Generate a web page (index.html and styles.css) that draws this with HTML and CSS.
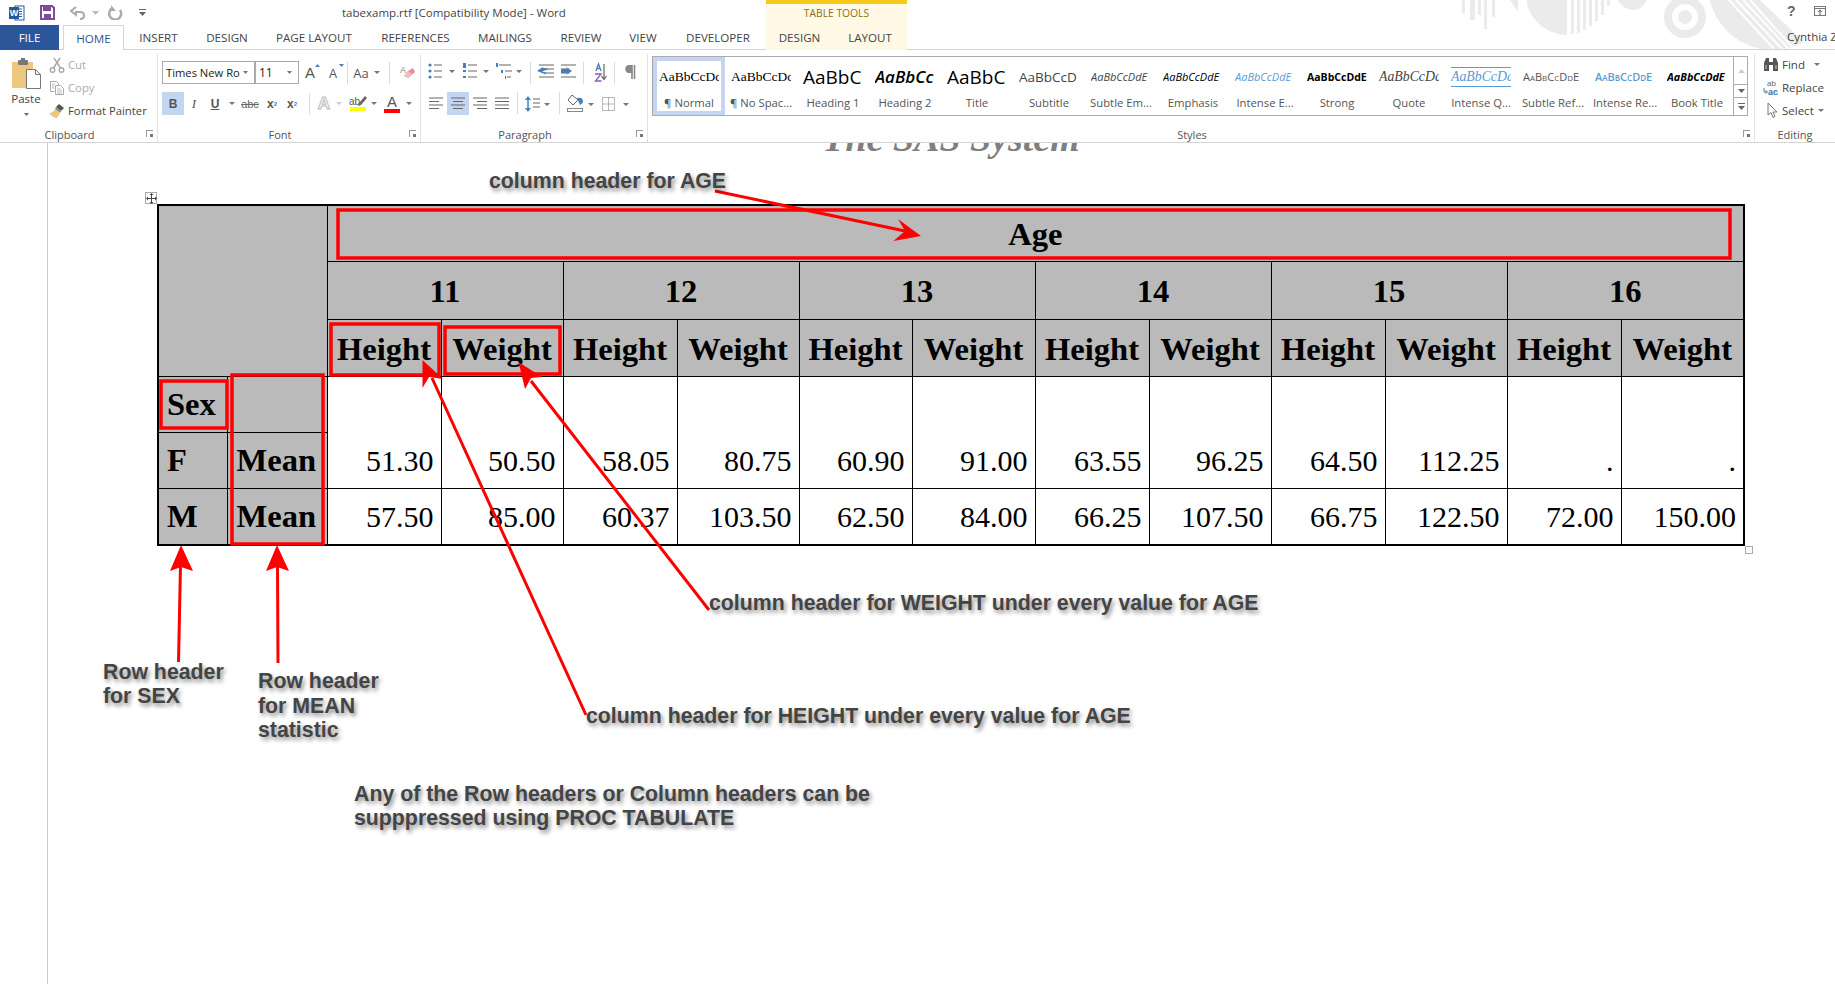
FILE: index.html
```html
<!DOCTYPE html>
<html lang="en">
<head>
<meta charset="utf-8">
<title>tabexamp.rtf - Word</title>
<link rel="stylesheet" href="styles.css">
</head>
<body>
<div class="app">
  <header class="head">
    <svg class="art" width="375" height="50" viewBox="1460 0 375 50" aria-hidden="true">
      <g fill="#ebebeb">
        <rect x="1462" y="0" width="3" height="13"/><rect x="1470" y="0" width="5" height="20"/><rect x="1478" y="0" width="3" height="15"/><rect x="1484" y="0" width="3" height="29"/><rect x="1492" y="0" width="3" height="17"/>
        <path d="M1510 0h8v12z"/>
        <path d="M1527 0h40v35c-18 0-34-12-40-30z"/>
        <path d="M1571 0h3v34h-3zM1577 0h3v33h-3zM1583 0h3v30h-3zM1589 0h3v26h-3zM1595 0h3v21h-3zM1601 0h3v15h-3zM1607 0h3v6h-3z"/>
        <path d="M1618 0h29c-3 6-8 10-14 10s-12-4-15-10z"/>
        <circle cx="1685" cy="17" r="21"/>
        <circle cx="1773" cy="-15" r="65"/>
      </g>
      <circle cx="1685" cy="17" r="13" fill="#fff"/><circle cx="1685" cy="17" r="7" fill="#ebebeb"/>
      <path d="M1760 0h80v50h-28z" fill="#fff"/>
      <g stroke="#fff" stroke-width="2"><path d="M1729 0l45 49M1736 0l46 49M1743 0l46 49M1750 0l44 49"/></g>
    </svg>
    <div class="titlebar">
      <div class="qat">
        <svg width="16" height="16" class="qat-word" viewBox="0 0 16 16"><rect x="6" y="1" width="9" height="14" fill="#fff" stroke="#2b579a"/><path d="M9 4h4M9 6.500h4M9 9h4M9 11.500h4" stroke="#2b579a"/><rect x="0" y="2" width="10" height="12" fill="#2b579a"/><text x="5" y="11" class="word-w">W</text></svg>
        <svg width="15" height="15" class="qat-save" viewBox="0 0 15 15"><path d="M1 1h11l2 2v11H1z" fill="none" stroke="#7e4a9e" stroke-width="2"/><rect x="3" y="1" width="8" height="5" fill="#7e4a9e"/><rect x="4" y="9" width="7" height="5" fill="#7e4a9e"/></svg>
        <svg width="17" height="14" class="qat-undo" viewBox="0 0 17 14"><path d="M6 1L1 5l5 4V6h5c2 0 3 2 3 3.500S13 13 10 13" fill="none" stroke="#aaa" stroke-width="2"/></svg>
        <svg width="7" height="4" class="qat-caret" viewBox="0 0 7 4"><path d="M0 0h7L3.500 4z" fill="#bbb"/></svg>
        <svg width="16" height="15" class="qat-redo" viewBox="0 0 16 15"><path d="M5 3a6 6 0 1 0 7 2" fill="none" stroke="#aaa" stroke-width="2.500"/><path d="M3 0v6h5z" fill="#aaa"/></svg>
        <svg width="7" height="7" class="qat-more" viewBox="0 0 7 7"><path d="M0 0.500h7" stroke="#666"/><path d="M0 3h7L3.500 7z" fill="#666"/></svg>
      </div>
      <div class="doc-name">tabexamp.rtf [Compatibility Mode] - Word</div>
      <div class="tools-title">TABLE TOOLS</div>
      <div class="win">
        <span class="help">?</span>
        <svg width="12" height="10" viewBox="0 0 12 10"><rect x="0.500" y="0.500" width="11" height="9" fill="none" stroke="#777"/><path d="M0 2.500h12" stroke="#777"/><path d="M6 3.500l-2.500 2.500h5zM5.500 5h1v4h-1z" fill="#555"/></svg>
      </div>
    </div>
    <nav class="tabs">
      <span class="tab file">FILE</span><span></span>
      <span class="tab home">HOME</span>
      <span class="tab">INSERT</span><span class="tab">DESIGN</span><span class="tab">PAGE LAYOUT</span><span class="tab">REFERENCES</span><span class="tab">MAILINGS</span><span class="tab">REVIEW</span><span class="tab">VIEW</span><span class="tab">DEVELOPER</span>
      <span class="tab ctx">DESIGN</span><span class="tab ctx">LAYOUT</span>
      <span class="user">Cynthia Z</span>
    </nav>
  </header>

  <section class="ribbon">
    <div class="group g-clip">
      <div class="g-body clip-body">
        <div class="paste">
          <svg width="31" height="31" viewBox="0 0 31 31"><rect x="1" y="4" width="21" height="26" fill="#eec77f"/><rect x="7" y="2" width="10" height="5" rx="1" fill="#777"/><rect x="10" y="0" width="4" height="3" fill="#777"/><path d="M15.500 11.500h9l5 5v14h-14z" fill="#fff" stroke="#777"/><path d="M24.500 11.500v5h5" fill="none" stroke="#777"/></svg>
          <span class="paste-t">Paste</span>
          <svg width="5" height="3" class="paste-c" viewBox="0 0 5 3"><path d="M0 0h5L2.500 3z" fill="#666"/></svg>
        </div>
        <div class="clip-list">
          <div class="clip-row dim"><svg width="16" height="16" viewBox="0 0 16 16"><circle cx="3.500" cy="13" r="2.300" fill="none" stroke="#aaa" stroke-width="1.400"/><circle cx="12.500" cy="13" r="2.300" fill="none" stroke="#aaa" stroke-width="1.400"/><path d="M4.500 11L11 1M11.500 11L5 1" stroke="#aaa" stroke-width="1.500"/></svg><span>Cut</span></div>
          <div class="clip-row dim"><svg width="16" height="16" viewBox="0 0 16 16"><path d="M1.500 1.500h6l2 2v2M1.500 1.500v10h4" fill="none" stroke="#aaa"/><path d="M6.500 5.500h5l3 3v6h-8z" fill="#fff" stroke="#aaa"/><path d="M8 9h4M8 11h5M8 13h5M3 4h3M3 6h2M3 8h2" stroke="#bbb"/></svg><span>Copy</span></div>
          <div class="clip-row"><svg width="16" height="16" viewBox="0 0 16 16"><path d="M10 1l5 4-3 3-5-4z" fill="#555"/><path d="M7 4l5 4-1 2-5-4z" fill="#888"/><path d="M6 6l5 4-3 5c-2 0-6-2-8-5 2 0 5-1 6-4z" fill="#eec77f"/></svg><span>Format Painter</span></div>
        </div>
      </div>
      <div class="g-label">Clipboard<i class="launch"></i></div>
    </div>

    <div class="group g-font">
      <div class="g-body rows">
        <div class="row">
          <span class="combo c-name">Times New Ro<svg width="5" height="3" viewBox="0 0 5 3"><path d="M0 0h5L2.500 3z" fill="#777"/></svg></span>
          <span class="combo c-size">11<svg width="5" height="3" viewBox="0 0 5 3"><path d="M0 0h5L2.500 3z" fill="#777"/></svg></span>
          <span class="ib w22 big-a">A<svg class="tick" width="5" height="3" viewBox="0 0 5 3"><path d="M0 3h5L2.500 0z" fill="#4a7ebb"/></svg></span>
          <span class="ib w24 small-a">A<svg class="tick" width="5" height="3" viewBox="0 0 5 3"><path d="M0 0h5L2.500 3z" fill="#4a7ebb"/></svg></span>
          <span class="ib w4"><i class="sep"></i></span>
          <span class="ib w24 case">Aa</span>
          <span class="ib w8"><i class="car"></i></span>
          <span class="ib w16"><i class="sep"></i></span>
          <span class="ib w20"><svg width="16" height="16" viewBox="0 0 16 16"><path d="M9 6l5-3 2 4-7 6-4-2z" fill="#ec8c9c"/><path d="M5 11l4-5 4 3-4 4z" fill="#f6b8c2"/><text x="1" y="8" class="era-a">A</text></svg></span>
        </div>
        <div class="row">
          <span class="ib w22 on tb">B</span>
          <span class="ib w20 ti">I</span>
          <span class="ib w22 tu">U</span>
          <span class="ib w12"><i class="car"></i></span>
          <span class="ib w24 ts">abc</span>
          <span class="ib w20 tb">x<sub class="tsub">2</sub></span>
          <span class="ib w20 tb">x<sup class="tsub">2</sup></span>
          <span class="ib w14"><i class="sep"></i></span>
          <span class="ib w16 effect">A</span>
          <span class="ib w14"><i class="car light"></i></span>
          <span class="ib w24 stack"><span class="ab">ab<svg class="pen" width="9" height="10" viewBox="0 0 9 10"><path d="M7 0l2 2-6 7-3 1 1-3z" fill="#666"/></svg></span><i class="bar yellow"></i></span>
          <span class="ib w8"><i class="car"></i></span>
          <span class="ib w28 stack"><span class="fa">A</span><i class="bar red"></i></span>
          <span class="ib w6"><i class="car"></i></span>
        </div>
      </div>
      <div class="g-label">Font<i class="launch"></i></div>
    </div>

    <div class="group g-para">
      <div class="g-body rows">
        <svg class="pr" width="226" height="23" viewBox="421 61 226 23">
          <g fill="#4a7ebb"><circle cx="430" cy="65" r="1.600"/><circle cx="430" cy="71" r="1.600"/><circle cx="430" cy="77" r="1.600"/></g>
          <path d="M434 65h8M434 71h8M434 77h8M468 65h9M468 71h9M468 77h9M499 65h12M505 71h7M507 77h4M539 65h15M545 69h9M545 73h9M539 77h15M561 65h15M561 69h8M561 73h8M561 77h15" stroke="#666" fill="none"/>
          <path d="M463 63h3v5h-3zM463 70h3v2h-3zM463 76h3v2h-3zM496 63h2v4h-2zM501 70h2v3h-2zM505 76h1v3h-1z" fill="#4a7ebb"/>
          <path d="M549 69l-7 2.500 4 1v2l-9-3.500 5-3.500zM561 69h7l-3-3 7 5-7 5 3-3h-7z" fill="#4a7ebb"/>
          <path d="M449 70h6l-3 3zM483 70h6l-3 3zM516 70h6l-3 3z" fill="#777"/>
          <path d="M530.500 62v22M583.500 62v22M614.500 62v22" stroke="#dcdcdc"/>
          <path d="M596 71l2.500-7 2.500 7M597 68.500h3" stroke="#4a7ebb" fill="none" stroke-width="1.300"/>
          <path d="M595 74h6l-5.500 7h6" stroke="#8e5bb0" fill="none" stroke-width="1.300"/>
          <path d="M604 64v15M601.500 76l2.500 3.500 2.500-3.500" stroke="#666" fill="none" stroke-width="1.200"/>
          <path d="M632 65v14M634.500 65v14" stroke="#888" stroke-width="1.600"/><path d="M635 65h-6c-5 0-5 8 0 8h3v-8z" fill="#888"/>
        </svg>
        <svg class="pr" width="226" height="23" viewBox="421 92 226 23">
          <rect x="447" y="92" width="22" height="23" fill="#c3d5f0"/>
          <path d="M429 98h14M429 101.500h10M429 105h14M429 108.500h10M451 98h14M453 101.500h10M451 105h14M453 108.500h10M473 98h14M477 101.500h10M473 105h14M477 108.500h10M495 98h14M495 101.500h14M495 105h14M495 108.500h14M533 99h7M533 103h7M533 107h7" stroke="#666" fill="none" stroke-width="1.100"/>
          <path d="M528 98v12" stroke="#4a7ebb" stroke-width="1.500"/><path d="M525 100l3-4 3 4zM525 108l3 4 3-4z" fill="#4a7ebb"/>
          <path d="M544 103h6l-3 3zM588 103h6l-3 3zM623 103h6l-3 3z" fill="#777"/>
          <path d="M517.500 92v22M559.500 92v22" stroke="#dcdcdc"/>
          <path d="M572 95l-4 5 5 5 5-5z" fill="#fff" stroke="#666"/><path d="M577 98c3-1 6 0 6 3s-2 3-3 4z" fill="#4a7ebb"/><rect x="567.500" y="108.500" width="15" height="3" fill="#fff" stroke="#888"/>
          <path d="M602.500 97.500h12v13h-12zM608.500 97.500v13M602.500 104h12" fill="none" stroke="#777" stroke-dasharray="1 1"/>
        </svg>
      </div>
      <div class="g-label">Paragraph<i class="launch"></i></div>
    </div>

    <div class="group g-styles">
      <div class="gallery">
        <div class="cell sel"><span class="s s-serif">AaBbCcDd</span><span class="l">¶ Normal</span></div>
        <div class="cell"><span class="s s-serif">AaBbCcDd</span><span class="l">¶ No Spac...</span></div>
        <div class="cell"><span class="s s-h1">AaBbC</span><span class="l">Heading 1</span></div>
        <div class="cell"><span class="s s-h2">AaBbCc</span><span class="l">Heading 2</span></div>
        <div class="cell"><span class="s s-h1">AaBbC</span><span class="l">Title</span></div>
        <div class="cell"><span class="s s-sub">AaBbCcD</span><span class="l">Subtitle</span></div>
        <div class="cell"><span class="s s-em dark">AaBbCcDdE</span><span class="l">Subtle Em...</span></div>
        <div class="cell"><span class="s s-em">AaBbCcDdE</span><span class="l">Emphasis</span></div>
        <div class="cell"><span class="s s-em blue">AaBbCcDdE</span><span class="l">Intense E...</span></div>
        <div class="cell"><span class="s s-strong">AaBbCcDdE</span><span class="l">Strong</span></div>
        <div class="cell"><span class="s s-quote">AaBbCcDd</span><span class="l">Quote</span></div>
        <div class="cell"><span class="s s-quote blue ruled">AaBbCcDd</span><span class="l">Intense Q...</span></div>
        <div class="cell"><span class="s s-caps">AaBbCcDdE</span><span class="l">Subtle Ref...</span></div>
        <div class="cell"><span class="s s-caps blue bold">AaBbCcDdE</span><span class="l">Intense Re...</span></div>
        <div class="cell"><span class="s s-book">AaBbCcDdE</span><span class="l">Book Title</span></div>
        <div class="scroll">
          <span class="sb sb-up"><svg width="7" height="4" viewBox="0 0 7 4"><path d="M0 4h7L3.500 0z" fill="#ccc"/></svg></span>
          <span class="sb sb-down"><svg width="7" height="4" viewBox="0 0 7 4"><path d="M0 0h7L3.500 4z" fill="#666"/></svg></span>
          <span class="sb sb-more"><svg width="7" height="7" viewBox="0 0 7 7"><path d="M0 0.500h7" stroke="#666"/><path d="M0 3h7L3.500 7z" fill="#666"/></svg></span>
        </div>
      </div>
      <div class="g-label styles-label">Styles<i class="launch"></i></div>
    </div>

    <div class="group g-edit">
      <div class="g-body edit-list">
        <div class="edit-row"><svg width="16" height="15" viewBox="0 0 16 15"><path d="M1 6l2-5h3v4h4V1h3l2 5v8H10V8H6v6H1z" fill="#555"/><path d="M3 8v4M13 8v4" stroke="#ccc"/></svg><span>Find</span><i class="car"></i></div>
        <div class="edit-row"><svg width="16" height="17" viewBox="0 0 16 17"><text x="4" y="7" class="ed-ab">ab</text><text x="5" y="16" class="ed-ac">ac</text><path d="M1 9v4h3M2.500 11.500L4.500 13 2.500 14.500" fill="none" stroke="#4a7ebb"/></svg><span>Replace</span></div>
        <div class="edit-row"><svg width="16" height="17" viewBox="0 0 16 17"><path d="M5 1v12l3-2.500 2 5 2-1-2-4.500h4z" fill="#fff" stroke="#777"/></svg><span>Select</span><i class="car tight"></i></div>
      </div>
      <div class="g-label g-label-edit">Editing</div>
    </div>
  </section>

  <main class="doc">
    <div class="doc-title">The SAS System</div>
    <table class="sas">
      <colgroup>
        <col class="c69"><col class="c100">
        <col class="c114"><col class="c122"><col class="c114"><col class="c122"><col class="c113"><col class="c123"><col class="c114"><col class="c122"><col class="c114"><col class="c122"><col class="c114"><col class="c123">
      </colgroup>
      <tr class="r56">
        <th colspan="2" rowspan="3"></th>
        <th colspan="12">Age</th>
      </tr>
      <tr class="r58">
        <th colspan="2">11</th><th colspan="2">12</th><th colspan="2">13</th><th colspan="2">14</th><th colspan="2">15</th><th colspan="2">16</th>
      </tr>
      <tr class="r57">
        <th>Height</th><th>Weight</th><th>Height</th><th>Weight</th><th>Height</th><th>Weight</th><th>Height</th><th>Weight</th><th>Height</th><th>Weight</th><th>Height</th><th>Weight</th>
      </tr>
      <tr class="r56">
        <th class="lh">Sex</th><th class="lh"></th>
        <td rowspan="2">51.30</td><td rowspan="2">50.50</td><td rowspan="2">58.05</td><td rowspan="2">80.75</td><td rowspan="2">60.90</td><td rowspan="2">91.00</td><td rowspan="2">63.55</td><td rowspan="2">96.25</td><td rowspan="2">64.50</td><td rowspan="2">112.25</td><td rowspan="2">.</td><td rowspan="2">.</td>
      </tr>
      <tr class="r56">
        <th class="lh">F</th><th class="lh">Mean</th>
      </tr>
      <tr class="r57">
        <th class="lh">M</th><th class="lh">Mean</th>
        <td>57.50</td><td>85.00</td><td>60.37</td><td>103.50</td><td>62.50</td><td>84.00</td><td>66.25</td><td>107.50</td><td>66.75</td><td>122.50</td><td>72.00</td><td>150.00</td>
      </tr>
    </table>
  </main>

  <div class="canvas">
    <svg class="marks" width="1835" height="984" viewBox="0 0 1835 984" aria-hidden="true">
      <g fill="none" stroke="#f00" stroke-width="3.500">
        <rect x="338" y="210" width="1392" height="48"/>
        <rect x="331" y="324" width="108" height="51"/>
        <rect x="445" y="327" width="115" height="47"/>
        <rect x="161" y="381" width="66" height="47"/>
        <rect x="232" y="375" width="91" height="169"/>
      </g>
      <g fill="none" stroke="#f00" stroke-width="3">
        <path d="M715 191L905 231M586 715L432 378M709 610L531 381M178.500 662L180.500 565M278 663L277.500 565"/>
      </g>
      <g fill="#f00">
        <path d="M921 236L898 219L905 231L893.500 241z"/>
        <path d="M422.500 360L422.500 388L429 377L443 379z"/>
        <path d="M518.500 362L525 389L531 378L542 377z"/>
        <path d="M181 545L170 571L181 567L193 571z"/>
        <path d="M277 545L266 571L277 567L289 571z"/>
      </g>
    </svg>
    <div class="move"><svg width="11" height="11" viewBox="0 0 11 11"><path d="M5.500 1v9M1 5.500h9" stroke="#444"/><path d="M5.500 0l2 2h-4zM5.500 11l2-2h-4zM0 5.500l2-2v4zM11 5.500l-2-2v4z" fill="#444"/></svg></div>
    <div class="resize"></div>
    <div class="note n-age">column header for AGE</div>
    <div class="note n-weight">column header for WEIGHT under every value for AGE</div>
    <div class="note n-height">column header for HEIGHT under every value for AGE</div>
    <div class="note n-sex">Row header<br>for SEX</div>
    <div class="note n-mean">Row header<br>for MEAN<br>statistic</div>
    <div class="note n-any">Any of the Row headers or Column headers can be<br>supppressed using PROC TABULATE</div>
  </div>
</div>
</body>
</html>
```

FILE: styles.css
```css
* { box-sizing: border-box; }
html, body { margin: 0; padding: 0; background: #fff; }
body { width: 1835px; height: 984px; overflow: hidden; font-family: "Open Sans", "Liberation Sans", sans-serif; color: #444; }
.app { position: relative; width: 1835px; height: 984px; display: flex; flex-direction: column; }

/* header */
.head { position: relative; height: 50px; flex: none; overflow: hidden; }
.art { position: absolute; top: 0; left: 1460px; }
.titlebar { position: relative; display: flex; height: 25px; }
.qat { width: 342px; display: flex; align-items: center; padding-left: 9px; }
.qat-save { margin-left: 15px; }
.qat-undo { margin-left: 15px; }
.qat-caret { margin-left: 5px; }
.qat-redo { margin-left: 9px; }
.qat-more { margin-left: 15px; }
.word-w { font: bold 9px "Liberation Sans", sans-serif; fill: #fff; text-anchor: middle; }
.doc-name { width: 424px; font-size: 11.500px; line-height: 26px; color: #444; }
.tools-title { width: 141px; background: #fff9e6; border-top: 4px solid #f5c91c; font-size: 10.300px; line-height: 18px; text-align: center; color: #8c6d1f; }
.win { margin-left: auto; width: 48px; display: flex; align-items: center; gap: 18px; padding-left: 0; padding-bottom: 3px; }
.help { font: bold 14px "Liberation Sans", sans-serif; color: #666; margin-left: 0; }
.tabs { position: relative; display: grid; grid-template-columns: 59px 4px 61px 69px 68px 106px 97px 82px 70px 54px 96px 67px 74px 1fr; height: 25px; border-bottom: 1px solid #d4d4d4; }
.tab { display: flex; align-items: center; justify-content: center; font-size: 11.600px; color: #444; }
.file { background: #2b579a; color: #fff; }
.home { border: 1px solid #d4d4d4; border-bottom: 0; background: #fff; color: #2b579a; height: 25px; position: relative; z-index: 1; }
.ctx { background: #fff9e6; }
.user { justify-self: end; align-self: center; font-size: 11.500px; width: 48px; white-space: nowrap; color: #444; margin-top: -2px; }

/* ribbon */
.ribbon { display: flex; flex: none; height: 93px; border-bottom: 1px solid #d4d4d4; }
.group { display: flex; flex-direction: column; height: 88px; margin-top: 4px; border-right: 1px solid #e3e3e3; }
.g-clip { width: 158px; }
.g-font { width: 263px; }
.g-para { width: 227px; }
.g-styles { width: 1107px; }
.g-edit { width: 80px; border-right: 0; }
.g-body { flex: 1; min-height: 0; }
.g-label { position: relative; height: 17px; line-height: 19px; font-size: 11px; text-align: center; color: #555; padding-right: 18px; }
.g-label-edit { padding-right: 0; }
.launch { position: absolute; right: 4px; top: 5px; width: 7px; height: 7px; border-left: 1px solid #999; border-top: 1px solid #999; }
.launch::after { content: ""; position: absolute; right: 0; bottom: 0; width: 3px; height: 3px; background: #777; }

.clip-body { display: flex; padding-left: 11px; }
.paste { width: 30px; display: flex; flex-direction: column; align-items: center; padding-top: 4px; }
.paste-t { font-size: 11.500px; line-height: 16px; margin-top: 2px; }
.paste-c { margin-top: 6px; }
.clip-list { margin-left: 8px; margin-top: -1px; }
.clip-row { display: flex; align-items: center; gap: 3px; height: 23px; font-size: 11.300px; white-space: nowrap; }
.dim { color: #aaa; }

.rows { display: flex; flex-direction: column; gap: 8px; padding-top: 7px; padding-left: 4px; }
.row { display: flex; height: 23px; align-items: center; }
.g-para .rows { padding-left: 0; }
.pr { display: block; flex: none; }
.combo { display: flex; align-items: center; justify-content: space-between; height: 23px; border: 1px solid #ababab; font-size: 11.200px; color: #222; padding: 0 6px 0 3px; white-space: nowrap; overflow: hidden; }
.c-name { width: 94px; border-right-width: 2px; }
.c-size { width: 43px; border-left: 0; font-size: 12px; }
.ib { position: relative; display: flex; align-items: center; justify-content: center; height: 23px; flex: none; font-size: 13px; color: #555; }
.w4 { width: 4px; } .w6 { width: 6px; } .w8 { width: 8px; } .w12 { width: 12px; } .w14 { width: 14px; } .w16 { width: 16px; } .w20 { width: 20px; } .w22 { width: 22px; } .w24 { width: 24px; } .w28 { width: 28px; }
.sep { display: block; width: 1px; height: 22px; background: #dcdcdc; flex: none; }
.car { display: block; flex: none; width: 0; height: 0; border: 3px solid transparent; border-top: 3px solid #777; border-bottom: 0; }
.car.light { border-top-color: #ccc; }
.big-a { font-size: 15px; font-family: "Liberation Sans", sans-serif; }
.small-a { font-size: 12px; font-family: "Liberation Sans", sans-serif; padding-top: 3px; }
.tick { position: absolute; right: 1px; top: 3px; }
.case { font-size: 13px; }
.era-a { font: 9px "Liberation Sans", sans-serif; fill: #888; }
.on { background: #c3d5f0; }
.tb { font: bold 12px "Liberation Sans", sans-serif; color: #555; }
.ti { font: italic 13px "Liberation Serif", serif; color: #555; }
.tu { font: bold 12px "Liberation Sans", sans-serif; text-decoration: underline; color: #555; }
.ts { font: 11px "Liberation Sans", sans-serif; text-decoration: line-through; color: #666; }
.tsub { font-size: 6px; color: #4a7ebb; line-height: 0; }
.effect { font: bold 17px "Liberation Sans", sans-serif; color: #fff; -webkit-text-stroke: 1px #bbb; }
.stack { flex-direction: column; gap: 0; }
.ab { display: flex; align-items: flex-start; font: 10px/11px "Liberation Sans", sans-serif; color: #555; }
.pen { margin-left: -2px; margin-top: 0; }
.fa { font: 15px/14px "Liberation Sans", sans-serif; color: #555; }
.bar { display: block; width: 16px; height: 4px; }
.yellow { background: #ff0; }
.red { background: #f00; }

/* gallery */
.g-styles { padding-left: 4px; padding-top: 2px; }
.gallery { display: flex; width: 1096px; height: 60px; border: 1px solid #ababab; flex: none; }
.cell { width: 72px; height: 58px; flex: none; display: flex; flex-direction: column; align-items: center; padding: 7px 6px 0; overflow: hidden; }
.sel { border: 4px solid #c3d5f0; padding: 3px 2px 0; }
.s { display: block; width: 60px; height: 26px; line-height: 26px; overflow: hidden; white-space: nowrap; text-align: left; color: #000; font-size: 11px; flex: none; }
.l { display: block; font-size: 11.300px; line-height: 25px; color: #555; white-space: nowrap; flex: none; }
.s-serif { font: 13.500px/26px "Liberation Serif", serif; }
.s-h1 { font: 19px/26px "Open Sans", sans-serif; }
.s-h2 { font: italic 600 17px/26px "Open Sans", sans-serif; }
.s-sub { font: 13.500px/26px "Open Sans", sans-serif; color: #444; }
.s-em { font: italic 11px/26px "Open Sans", sans-serif; }
.dark { color: #444; }
.blue { color: #5b9bd5; }
.s-strong { font: bold 10.500px/26px "Open Sans", sans-serif; }
.s-quote { font: italic 13.800px/26px "Liberation Serif", serif; color: #444; }
.s-quote.blue { color: #5b9bd5; }
.ruled { height: 20px; line-height: 18px; margin-top: 3px; margin-bottom: 3px; border-top: 1px solid #5b9bd5; border-bottom: 1px solid #5b9bd5; }
.s-caps { font: 11px/26px "Open Sans", sans-serif; font-variant: small-caps; color: #555; }
.s-caps.blue { color: #5b9bd5; }
.bold { font-weight: 600; }
.s-book { font: italic bold 10.800px/26px "Open Sans", sans-serif; }
.scroll { width: 15px; flex: none; border-left: 1px solid #ababab; display: flex; flex-direction: column; }
.sb { display: flex; align-items: center; justify-content: center; }
.sb-up { height: 27px; }
.sb-down { height: 14px; border-top: 1px solid #ababab; border-bottom: 1px solid #ababab; }
.sb-more { flex: 1; }
.styles-label { width: 1102px; margin-top: auto; padding-right: 22px; }
.edit-list { padding: 0 0 0 8px; margin-top: -1px; }
.edit-row { display: flex; align-items: center; gap: 3px; height: 23px; font-size: 11.500px; }
.edit-row .car { margin-left: 6px; }
.edit-row .car.tight { margin-left: 1px; }
.ed-ab { font: 8px "Liberation Sans", sans-serif; fill: #666; }
.ed-ac { font: bold 9px "Liberation Sans", sans-serif; fill: #3a6ea5; }

/* document */
.doc { flex: 1; overflow: hidden; position: relative; }
.doc::before { content: ""; position: absolute; left: 47px; top: 0; bottom: 0; width: 1px; background: #ccc; }
.doc-title { margin-top: -24px; text-align: center; width: 1902px; font: italic bold 38px/38px "Liberation Serif", serif; color: #7f7f7f; }
.sas { margin: 47px 0 0 157px; table-layout: fixed; width: 1586px; border-collapse: collapse; border: 2px solid #000; font-family: "Liberation Serif", serif; color: #000; }
.sas th, .sas td { border: 1px solid #000; padding: 0; overflow: hidden; white-space: nowrap; }
.sas th { background: #bababa; font-size: 32.600px; font-weight: bold; text-align: center; padding-top: 3px; }
.sas th.lh { text-align: left; padding: 0 0 0 8px; }
.sas th.lh + th.lh { padding-left: 9px; }
.sas td { font-size: 30px; text-align: right; padding-right: 7px; vertical-align: bottom; background: #fff; line-height: 38px; padding-bottom: 8px; }
.c69 { width: 69px; } .c100 { width: 100px; } .c113 { width: 113px; } .c114 { width: 114px; } .c122 { width: 122px; } .c123 { width: 123px; }
.r56 { height: 56px; } .r57 { height: 57px; } .r58 { height: 58px; }

/* annotations: free canvas over the document */
.canvas { position: absolute; left: 0; top: 0; width: 1835px; height: 984px; pointer-events: none; }
.marks { position: absolute; left: 0; top: 0; }
.move { position: absolute; left: 145px; top: 192px; width: 12px; height: 12px; border: 1px solid #aaa; background: #fff; }
.move svg { display: block; }
.resize { position: absolute; left: 1745px; top: 546px; width: 8px; height: 8px; border: 1px solid #aaa; background: #fff; }
.note { position: absolute; font: bold 21.300px/24px "Liberation Sans", sans-serif; color: #444; white-space: nowrap; text-shadow: 2px 3px 4px rgba(0,0,0,.45); }
.n-age { left: 489px; top: 169px; }
.n-weight { left: 709px; top: 591px; }
.n-height { left: 586px; top: 704px; }
.n-sex { left: 103px; top: 660px; }
.n-mean { left: 258px; top: 669px; line-height: 24.500px; }
.n-any { left: 354px; top: 782px; }
```
